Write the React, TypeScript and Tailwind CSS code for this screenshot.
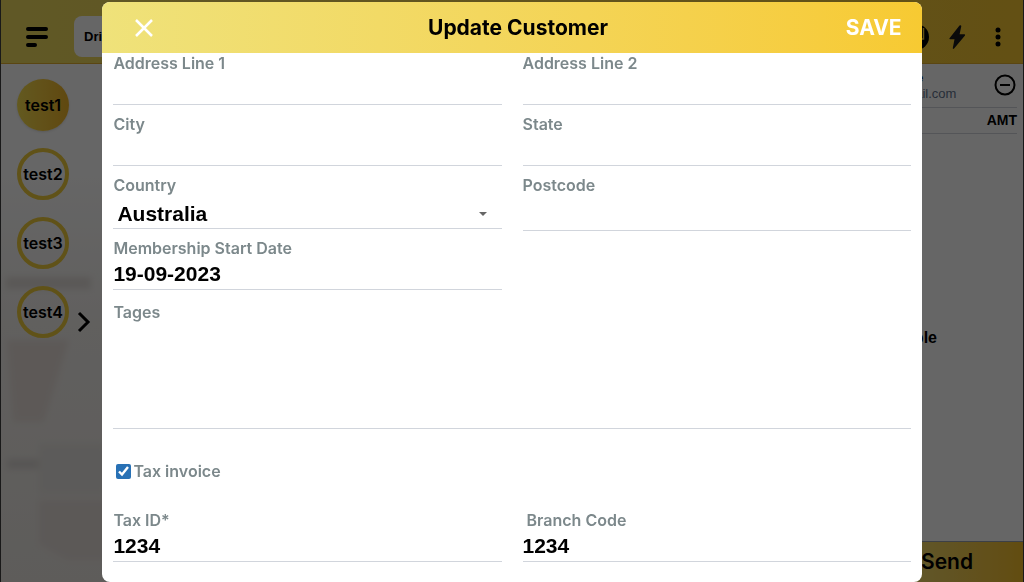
import type { InputHTMLAttributes } from 'react';

const categories = ['test1', 'test2', 'test3', 'test4'];

export default function App() {
  return (
    <div className="relative min-h-screen flex flex-col border-x border-neutral-700 bg-white font-['Inter','Liberation_Sans',sans-serif]">
      <AppHeader />
      <div className="flex-1 flex">
        <CategorySidebar />
        <CartPanel />
      </div>
      <UpdateCustomerDialog />
    </div>
  );
}

// ---------------------------------------------------------------------------
// Point of sale screen behind the dialog
// ---------------------------------------------------------------------------

function AppHeader() {
  return (
    <header className="h-16 flex items-center justify-between border-b border-[#e0b030] bg-linear-to-r from-[#f0dc60] to-[#f7c832] pt-2.5 pl-6 pr-[13px]">
      <div className="flex items-center gap-[25px]">
        <button type="button" aria-label="Menu">
          <svg width="24" height="24" viewBox="0 0 24 24" stroke="#000" strokeWidth="4" strokeLinecap="round">
            <path d="M3 4h18M3 12h18M3 20h7" />
          </svg>
        </button>
        <button type="button" className="h-[41px] w-52 rounded-lg bg-white px-2.5 text-left font-['Liberation_Sans',sans-serif] text-[13px] font-bold">
          Drinks
        </button>
      </div>
      <div className="flex items-center gap-[15px]">
        <button type="button" aria-label="History">
          <svg width="28" height="28" viewBox="0 0 28 28">
            <circle cx="14" cy="14" r="13" fill="#000" />
            <path d="M21.500 5v11h-7" fill="none" stroke="#f7cd3c" strokeWidth="1.5" />
          </svg>
        </button>
        <button type="button" aria-label="Quick actions">
          <svg width="24" height="26" viewBox="0 0 24 26">
            <path
              d="M14.5 1.5 4.5 14.2q-.5 1 .6 1h4.4L7.8 24q0 1.500 1.300.5L20 11.500q.5-1.200-.8-1.200h-4.600l1.700-8q0-1.700-1.800-.8z"
              fill="#1a1a1a"
            />
          </svg>
        </button>
        <button type="button" aria-label="More">
          <svg width="26" height="24" viewBox="0 0 26 24">
            <circle cx="14" cy="5" r="2.5" />
            <circle cx="14" cy="12" r="2.5" />
            <circle cx="14" cy="19" r="2.5" />
          </svg>
        </button>
      </div>
    </header>
  );
}

function CategorySidebar() {
  return (
    <aside className="relative w-1/4 overflow-hidden pt-[15px] pl-4">
      <SidebarBackdrop />
      <ul className="relative flex flex-col gap-[17px]">
        {categories.map((name, index) => (
          <li key={name} className="flex items-center gap-1">
            <button
              type="button"
              className={
                index === 0
                  ? 'size-[52px] rounded-full bg-linear-to-r from-[#f7df50] to-[#f0b428] text-base font-semibold shadow'
                  : 'size-[52px] rounded-full border-4 border-[#f0cc3c] text-base font-semibold'
              }
            >
              <span className="flex justify-center">{name}</span>
            </button>
            {index === categories.length - 1 && (
              <button type="button" aria-label="Show more" className="pt-5">
                <svg width="20" height="22" viewBox="0 0 20 22" fill="none" stroke="#000" strokeWidth="3">
                  <path d="M6 2l9 9-9 9" />
                </svg>
              </button>
            )}
          </li>
        ))}
      </ul>
    </aside>
  );
}

// Faded kitchen photo, reduced to its soft shapes
function SidebarBackdrop() {
  return (
    <svg
      className="absolute inset-0 size-full"
      viewBox="0 0 256 518"
      preserveAspectRatio="none"
      aria-hidden="true"
    >
      <defs>
        <linearGradient id="fade" x1="0" y1="0" x2="0" y2="1">
          <stop offset="0.2" stopColor="#fff" />
          <stop offset="0.5" stopColor="#f2efec" />
          <stop offset="1" stopColor="#ebe7e2" />
        </linearGradient>
        <filter id="soft">
          <feGaussianBlur stdDeviation="3" />
        </filter>
      </defs>
      <rect width="256" height="518" fill="url(#fade)" />
      <g filter="url(#soft)">
        <path d="M5 213h85v12H5z" fill="#e2ddd9" />
        <path d="M6 276h62l-25 82H12z" fill="#e8dfda" />
        <path d="M6 395h32v10H6z" fill="#dad6d3" />
        <path d="M38 380h68v50H38z" fill="#e7e4e0" />
        <path d="M38 436h68v60H66L38 480z" fill="#e6deda" />
      </g>
    </svg>
  );
}

function CartPanel() {
  return (
    <section className="ml-auto w-1/3 flex flex-col font-['Liberation_Sans',sans-serif]">
      <div className="mx-1.5 flex h-11 items-center justify-between border-b border-gray-300">
        <div className="w-[268px] text-right text-[13px] leading-4">
          <p className="pr-[33px] font-bold">Joe</p>
          <p className="text-slate-500">customer@mail.com</p>
        </div>
        <button type="button" aria-label="Remove customer">
          <svg width="24" height="24" viewBox="0 0 24 24" fill="none" stroke="#000" strokeWidth="2">
            <circle cx="12" cy="11" r="9.500" />
            <path d="M7 11h10" />
          </svg>
        </button>
      </div>
      <div className="mx-1.5 h-[26px] border-b border-gray-300 text-right text-sm leading-[25px] font-bold">AMT</div>
      <div className="flex-1 flex items-center justify-center">
        <p className="text-base font-bold">No Products Available</p>
      </div>
      <button
        type="button"
        className="h-[41px] w-[152px] self-end border-t border-gray-400 bg-linear-to-r from-[#f0e27a] to-[#f5bf28] font-['Inter',sans-serif] text-[21px] font-semibold"
      >
        Send
      </button>
    </section>
  );
}

// ---------------------------------------------------------------------------
// Dialog
// ---------------------------------------------------------------------------

function UpdateCustomerDialog() {
  return (
    <div className="fixed inset-0 flex justify-center bg-black/60 pt-0.5">
      <form
        role="dialog"
        aria-labelledby="dialog-title"
        className="w-4/5 flex flex-col overflow-hidden rounded-lg bg-white"
      >
        <header className="h-[51px] shrink-0 grid grid-cols-[1fr_auto_1fr] items-center bg-linear-to-r from-[#efe27a] to-[#f7ca32] pl-8 pr-5 text-[21px] font-bold">
          <button type="button" aria-label="Close" className="justify-self-start">
            <svg width="20" height="20" viewBox="0 0 20 20" stroke="#fff" strokeWidth="2.500">
              <path d="M2 2l16 16M18 2L2 18" />
            </svg>
          </button>
          <h1 id="dialog-title">Update Customer</h1>
          <button type="submit" className="justify-self-end text-white">SAVE</button>
        </header>

        <div className="flex-1 px-[11px]">
          <div className="grid grid-cols-2 items-start gap-x-[21px]">
            <div className="flex flex-col gap-[9px]">
              <Field id="address1" label="Address Line 1" />
              <Field id="city" label="City" />
              <CountrySelect />
              <Field id="membership" label="Membership Start Date" defaultValue="19-09-2023" />
            </div>
            <div className="flex flex-col gap-[9px]">
              <Field id="address2" label="Address Line 2" />
              <Field id="state" label="State" />
              <Field id="postcode" label="Postcode" tall />
            </div>
          </div>

          <div className="mt-3 flex flex-col">
            <FieldLabel id="tages" label="Tages" />
            <textarea
              id="tages"
              className="h-[107px] resize-none border-b border-gray-300 font-['Liberation_Sans',sans-serif] text-[21px] font-bold outline-none"
            />
          </div>

          <div className="mt-8 mb-[29px] flex h-5 items-center gap-0.5 pl-[3px]">
            <input id="tax-invoice" type="checkbox" defaultChecked className="size-[15px] accent-[#2871b5]" />
            <FieldLabel id="tax-invoice" label="Tax invoice" />
          </div>

          <div className="grid grid-cols-2 gap-x-[21px]">
            <Field id="tax-id" label="Tax ID*" defaultValue="1234" />
            <Field id="branch-code" label="Branch Code" defaultValue="1234" indentLabel />
          </div>
        </div>
      </form>
    </div>
  );
}

function FieldLabel({ id, label, indent }: { id: string; label: string; indent?: boolean }) {
  return (
    <label
      htmlFor={id}
      className={indent ? 'pl-1 text-base leading-5 font-semibold text-[#7c888b]' : 'text-base leading-5 font-semibold text-[#7c888b]'}
    >
      {label}
    </label>
  );
}

type FieldProps = InputHTMLAttributes<HTMLInputElement> & {
  id: string;
  label: string;
  tall?: boolean;
  indentLabel?: boolean;
};

function Field({ id, label, tall, indentLabel, ...inputProps }: FieldProps) {
  return (
    <div className="flex flex-col">
      <FieldLabel id={id} label={label} indent={indentLabel} />
      <input
        id={id}
        type="text"
        className={
          tall
            ? "h-9 w-full border-b border-gray-300 font-['Liberation_Sans',sans-serif] text-[21px] font-bold outline-none"
            : "h-8 w-full border-b border-gray-300 font-['Liberation_Sans',sans-serif] text-[21px] font-bold outline-none"
        }
        {...inputProps}
      />
    </div>
  );
}

function CountrySelect() {
  return (
    <div className="flex flex-col">
      <FieldLabel id="country" label="Country" />
      <div className="flex h-[34px] items-center border-b border-gray-300 pt-1 pl-1 pr-3.5">
        <select id="country" className="flex-1 appearance-none font-['Liberation_Sans',sans-serif] text-[21px] font-bold outline-none">
          <option>Australia</option>
        </select>
        <svg width="10" height="6" viewBox="0 0 10 6" fill="#666" aria-hidden="true">
          <path d="M1 1h8L5 5z" />
        </svg>
      </div>
    </div>
  );
}
